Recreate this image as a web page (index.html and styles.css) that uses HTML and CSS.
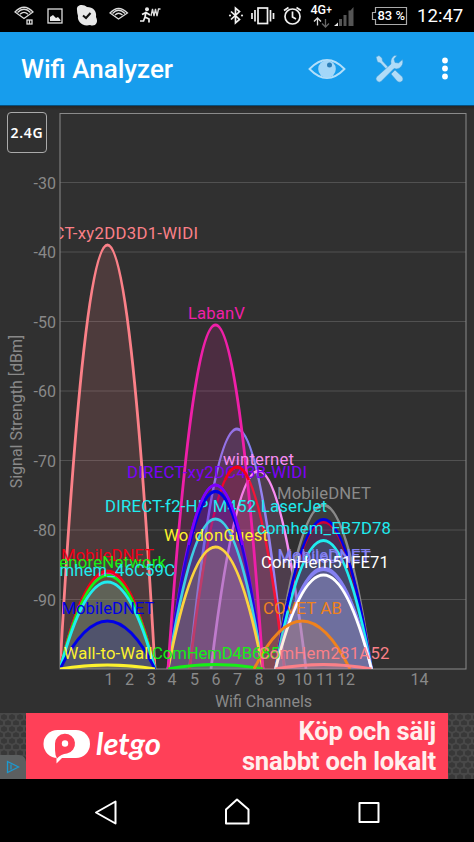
FILE: index.html
```html
<!DOCTYPE html>
<html lang="sv">
<head>
<meta charset="UTF-8">
<meta name="viewport" content="width=device-width, initial-scale=1.0">
<title>Wifi Analyzer</title>
<link rel="stylesheet" href="styles.css">
</head>
<body>
<div class="phone">

<div class="status-bar">
    <svg class="status-left" width="170" height="32" viewBox="0 0 170 32">
        <g class="line">
            <path d="M15 12Q24 2.500 33 12L24 18.500Z"/>
            <path d="M17.500 12.500Q24 6 30.500 12.500M20 14.300Q24 10.500 28 14.300"/>
            <rect x="27" y="20" width="5" height="4"/>
            <path d="M29.500 20V24"/>
            <rect x="48" y="9" width="14" height="14"/>
            <path d="M110 13Q118.500 4 127.500 13L118.500 19Z"/>
            <path d="M112.500 13.500Q118.500 7 125 13.500M115 15Q118.500 11.500 122.500 15"/>
        </g>
        <path class="solid" d="M50 21V17L53 15L56 18L58 17L60.500 20V21Z"/>
        <path class="solid" d="M77 10C76 4 84 4 87 7C93 7 97 11 96 17C99 23 95 27 90 25C82 27 77 21 78 16Q77 13 77 10Z"/>
        <path class="check" d="M83 15.500L86 18L90.500 13"/>
        <circle class="solid" cx="147" cy="9.300" r="2"/>
        <path class="runner" d="M146 12L145 17L149 19V22.500M145 17L143.500 21H140M142 14.500L146 12.500L150 15"/>
        <path class="line" d="M151 16L152.500 9L154 16L155.500 9L157 16L158.500 9L160.500 9"/>
    </svg>
    <svg class="status-right" width="130" height="32" viewBox="225 0 130 32">
        <path class="runner" d="M231 11.500L239.500 19.500L235.500 23V8L239.500 11.500L231 19.500"/>
        <circle class="solid" cx="230" cy="15.500" r="1.100"/>
        <circle class="solid" cx="242" cy="15.500" r="1.100"/>
        <rect class="runner" x="258" y="8" width="9.500" height="15.500"/>
        <path class="runner" d="M255 10V21.500M252 13V19M270.500 10V21.500M273.500 13V19"/>
        <circle class="runner" cx="292.500" cy="16.500" r="7.500"/>
        <path class="runner" d="M292.500 11.500V17L296 19M284 10.500L288.500 7.500M301 10.500L296.500 7.500"/>
        <text class="net" x="310.500" y="13.500">4G<tspan dy="-1" class="plus">+</tspan></text>
        <path class="line" d="M317.500 25.500V18M314 21.500L317.500 18L321 21.500"/>
        <path class="down" d="M325.500 19V27M322 23.500L325.500 27L329 23.500"/>
        <path class="solid" d="M334 26L338 22.500V26Z"/>
        <path class="bars" d="M339 26V19H342V26ZM343.500 26V15H346.500V26ZM348.500 26V10.500H350.500L353.500 7V26Z"/>
    </svg>
    <svg class="battery-icon" width="38" height="32" viewBox="370 0 38 32">
        <path class="frame" d="M375.500 7.500H406.500V24.500H375.500V19.500H372.500V12.500H375.500Z"/>
        <text class="battery" x="377.500" y="20.200" textLength="27.500">83 %</text>
    </svg>
    <span class="clock">12:47</span>
</div>

<header class="app-bar">
    <h1>Wifi Analyzer</h1>
    <svg class="actions" width="152" height="40" viewBox="304 48 152 40">
        <path class="eye" d="M309.500 69Q327 51 344.500 69Q327 87 309.500 69Z"/>
        <circle class="pale" cx="327" cy="69" r="8.800"/>
        <circle class="pupil" cx="329.500" cy="65" r="2.500"/>
        <g class="tools">
            <path d="M376 57L379 55.500L382 58L382.500 61L389.500 68.500L387.500 70.500L380.500 63L377.500 62Z"/>
            <path d="M391 74L395 70L402.500 77Q404 81 400.500 82Q398.500 82.500 397 81Z"/>
            <path d="M376.500 77L391 64Q390 58 394.500 55.500L397 55.500L394 59L395 62.500L398.500 63L402.500 59.500Q404 65 399.500 68Q397 69.500 394 68.500L381 81.500Q379 83 377 81Q375 79 376.500 77Z"/>
        </g>
        <circle class="dot" cx="445" cy="60.500" r="2.900"/>
        <circle class="dot" cx="445" cy="68.500" r="2.900"/>
        <circle class="dot" cx="445" cy="76.500" r="2.900"/>
    </svg>
</header>

<main class="chart">
    <button class="band">2.4G</button>
    <svg width="474" height="608" viewBox="0 105 474 608">
        <defs>
            <clipPath id="plot"><rect x="60" y="113" width="406" height="556"/></clipPath>
        </defs>

        <path class="grid" d="M60 182.500H466M60 252H466M60 321.500H466M60 391H466M60 460.500H466M60 530H466M60 599.500H466"/>
        <g class="axis y-axis">
            <text x="56" y="188.500">-30</text>
            <text x="56" y="258">-40</text>
            <text x="56" y="327.500">-50</text>
            <text x="56" y="397">-60</text>
            <text x="56" y="466.500">-70</text>
            <text x="56" y="536">-80</text>
            <text x="56" y="605.500">-90</text>
        </g>
        <g class="axis">
            <text x="109" y="685">1</text>
            <text x="129.500" y="685">2</text>
            <text x="151.500" y="685">3</text>
            <text x="172" y="685">4</text>
            <text x="194.500" y="685">5</text>
            <text x="216" y="685">6</text>
            <text x="237.500" y="685">7</text>
            <text x="259" y="685">8</text>
            <text x="281" y="685">9</text>
            <text x="303" y="685">10</text>
            <text x="325" y="685">11</text>
            <text x="346" y="685">12</text>
            <text x="419.500" y="685">14</text>
            <text x="263.500" y="707">Wifi Channels</text>
            <text x="0" y="0" transform="translate(22 411.500) rotate(-90)">Signal Strength [dBm]</text>
        </g>
        <rect class="border" x="60" y="113.500" width="406" height="555.500"/>

        <g class="curves" clip-path="url(#plot)">
            <!-- channels 7 and 8 -->
            <path class="lilac" d="M189.500 669Q237 189 284.500 669"/>
            <path class="red" d="M189.500 669Q237 265 284.500 669"/>
            <path class="violet" d="M211 669Q258.500 273 306 669"/>
            <!-- channel 6 -->
            <path class="purple" d="M168 669Q215.500 301 263 669"/>
            <path class="blue" d="M168 669Q215.500 314 263 669"/>
            <path class="cyan" d="M168 669Q215.500 369 263 669"/>
            <path class="yellow" d="M168 669Q215.500 425 263 669"/>
            <path class="magenta" d="M168 669Q215.500 -19 263 669"/>
            <path class="green" d="M168 669Q215.500 660 263 669"/>
            <!-- channels 10 and 11 -->
            <path class="gray" d="M275.500 669Q323.500 341 371.500 669"/>
            <path class="red" d="M275.500 669Q323.500 375 371.500 669"/>
            <path class="blue" d="M275.500 669Q323.500 370 371.500 669"/>
            <path class="cyan" d="M275.500 669Q323.500 412 371.500 669"/>
            <path class="lilac" d="M275.500 669Q323.500 467 371.500 669"/>
            <path class="lilac" d="M275.500 669Q323.500 470 371.500 669"/>
            <path class="white" d="M275.500 669Q323.500 481 371.500 669"/>
            <path class="orange" d="M254 669Q302 573 350 669"/>
            <path class="pink" d="M275.500 669Q323.500 660 371.500 669"/>
            <!-- channel 1 -->
            <path class="pink" d="M60 669Q107.500 -179 155 669"/>
            <path class="magenta" d="M60 669Q107.500 476 155 669"/>
            <path class="red" d="M60 669Q107.500 473 155 669"/>
            <path class="green" d="M60 669Q107.500 482 155 669"/>
            <path class="cyan" d="M60 669Q107.500 495 155 669"/>
            <path class="blue" d="M60 669Q107.500 573 155 669"/>
            <path class="yellow" d="M60 669Q107.500 661 155 669"/>
        </g>
        <g class="names" clip-path="url(#plot)">
            <text class="pink" x="107.500" y="239" textLength="181">DIRECT-xy2DD3D1-WIDI</text>
            <text class="magenta" x="216.500" y="318.500" textLength="57">LabanV</text>
            <text class="purple" x="217" y="478" textLength="180">DIRECT-xy2DC43B-WIDI</text>
            <text class="violet" x="258.500" y="464.500" textLength="71">winternet</text>
            <text class="gray" x="324" y="499" textLength="94">MobileDNET</text>
            <text class="cyan" x="216" y="512" textLength="222">DIRECT-f2-HP M452 LaserJet</text>
            <text class="yellow" x="216" y="540.500" textLength="104">WordonGuest</text>
            <text class="cyan" x="324" y="533.500" textLength="134">comhem_EB7D78</text>
            <text class="lilac" x="324" y="560.500" textLength="93">MobileDNET</text>
            <text class="lilac" x="324.500" y="562.500" textLength="93">MobileDNET</text>
            <text class="white" x="325" y="568" textLength="128">ComHem51FE71</text>
            <text class="red" x="107.500" y="561" textLength="93">MobileDNET</text>
            <text class="green" x="108" y="567.500" textLength="116">LenoreNetwork</text>
            <text class="cyan" x="108" y="575.500" textLength="134">comhem_46C59C</text>
            <text class="orange" x="302.500" y="614" textLength="79">COVET AB</text>
            <text class="blue" x="108" y="614" textLength="93">MobileDNET</text>
            <text class="green" x="216" y="659" textLength="128">ComHemD4B685</text>
            <text class="pink" x="324" y="659" textLength="131">ComHem281A52</text>
            <text class="yellow" x="108" y="659" textLength="89">Wall-to-Wall</text>
        </g>
        <!-- curve tops that run over the names -->
        <g class="tops">
            <path class="red" d="M225 480Q237 454 249 480"/>
            <path class="blue" d="M189.400 545Q215.500 438 241.600 545"/>
            <path class="purple" d="M188.400 545Q215.500 425 242.600 545"/>
            <path class="blue" d="M286 610.500L289.800 594"/>
        </g>
    </svg>
</main>

<div class="ad">
    <svg class="mesh" width="474" height="66">
        <defs>
            <pattern id="hex" width="8" height="12" patternUnits="userSpaceOnUse">
                <path d="M4 1L7 2.500V5.500L4 7L1 5.500V2.500ZM0 7L3 8.500V11.500L0 13L-3 11.500V8.500ZM8 7L11 8.500V11.500L8 13L5 11.500V8.500Z"/>
            </pattern>
        </defs>
        <rect width="474" height="66" fill="url(#hex)"/>
    </svg>
    <div class="banner">
        <svg width="140" height="66" viewBox="26 713 140 66">
            <rect class="logo" x="43.500" y="730" width="46.500" height="28" rx="14"/>
            <path class="logo" d="M56.500 754V763.500L66 754Z"/>
            <path class="pin" d="M55 750V743.500A10 10 0 1 1 67 753.500Q61 754 57 758.500Q55 755 55 750Z"/>
            <circle class="logo" cx="65" cy="743.500" r="3.200"/>
            <text class="brand" x="96" y="755" textLength="65" lengthAdjust="spacingAndGlyphs">letgo</text>
        </svg>
        <p>Köp och sälj<br>snabbt och lokalt</p>
    </div>
    <div class="ad-choice">
        <svg width="14" height="14" viewBox="0 0 14 14"><path d="M1.500 1.500L12.500 7L1.500 12.500ZM5 4.500V9.500"/></svg>
    </div>
</div>

<nav class="nav-bar">
    <svg width="474" height="63" viewBox="0 779 474 63">
        <path d="M115.500 801.500V823.500L96 812.500Z"/>
        <path d="M226 823.500V809.500L237 799.500L248.500 809.500V823.500Z"/>
        <rect x="359.500" y="803" width="19" height="19"/>
    </svg>
</nav>

</div>
</body>
</html>
```
FILE: styles.css
```css
body {
    margin: 0;
    background: #000;
    font-family: Roboto, sans-serif;
}

svg {
    display: block;
}

.phone {
    width: 474px;
    height: 842px;
    overflow: hidden;
    display: flex;
    flex-direction: column;
}

/* status bar */
.status-bar {
    height: 32px;
    display: flex;
    align-items: center;
    color: #eee;
    background: #000;
}

.status-right {
    margin-left: 55px;
}

.battery-icon {
    margin-left: 15px;
}

.clock {
    margin-left: 9px;
    font-size: 18.6px;
    white-space: nowrap;
    color: #fff;
}

.line, .runner, .check, .down, .frame {
    fill: none;
    stroke: #ddd;
    stroke-width: 1.3;
}

.runner {
    stroke: #f0f0f0;
    stroke-width: 1.7;
}

.check {
    stroke: #111;
    stroke-width: 2;
}

.down {
    stroke: #666;
}

.frame {
    stroke: #aaa;
    stroke-width: 1.2;
}

.solid {
    fill: #e8e8e8;
}

.bars {
    fill: #555;
}

.net {
    fill: #fff;
    font-size: 12.5px;
    font-weight: 500;
}

.plus {
    font-size: 10px;
}

.battery {
    fill: #fff;
    font-size: 13px;
    font-weight: 500;
}

/* title bar */
.app-bar {
    height: 73px;
    display: flex;
    align-items: center;
    justify-content: space-between;
    padding: 0 18px 0 21px;
    box-sizing: border-box;
    background: #179ded;
}

.app-bar h1 {
    margin: 1px 0 0;
    font-size: 26px;
    font-weight: 500;
    color: #fff;
}

.actions {
    margin-top: -1px;
}

.eye {
    fill: none;
    stroke: #b3dffa;
    stroke-width: 1.8;
}

.pale {
    fill: #a3d7f8;
}

.pupil {
    fill: #2c7fb8;
}

.tools {
    fill: #b0dcf8;
    stroke: #3b98d4;
    stroke-width: 0.5;
}

.dot {
    fill: #fff;
}

/* chart */
.chart {
    position: relative;
    height: 608px;
    background: linear-gradient(#064f7e 0, #064f7e 1px, #252525 1px, #303030 5px);
}

.band {
    position: absolute;
    left: 7px;
    top: 7px;
    width: 40px;
    height: 41px;
    padding: 0;
    border: 1.5px solid #aaa;
    border-radius: 4px;
    background: #303030;
    color: #fff;
    font: 600 14px "Noto Sans", sans-serif;
    letter-spacing: 0.7px;
}

.grid {
    stroke: #515151;
    fill: none;
}

.border {
    fill: none;
    stroke: #8a8a8a;
}

.axis text {
    fill: #898989;
    font-size: 16px;
    text-anchor: middle;
}

.axis.y-axis text {
    text-anchor: end;
}

.curves path {
    fill: currentColor;
    fill-opacity: 0.15;
    stroke: currentColor;
    stroke-width: 2.8;
}

.tops path {
    fill: none;
    stroke: currentColor;
    stroke-width: 2.8;
}

.names text {
    fill: currentColor;
    font-size: 16.7px;
    text-anchor: middle;
}

.pink { color: #fb8088; }
.magenta { color: #ef1fa8; }
.lilac { color: #8480f2; }
.violet { color: #f78cf3; }
.purple { color: #7d00fb; }
.blue { color: #0000e6; }
.cyan { color: #20ecef; }
.yellow { color: #fdf22d; }
.green { color: #16ef16; }
.red { color: #f20018; }
.gray { color: #8a8a8a; }
.orange { color: #ef821d; }
.white { color: #fff; }

/* ad */
.ad {
    position: relative;
    height: 66px;
    display: flex;
    justify-content: center;
    background: #484848;
}

.mesh {
    position: absolute;
    left: 0;
    top: 0;
}

.mesh path {
    fill: #383838;
}

.banner {
    position: relative;
    width: 422px;
    display: flex;
    justify-content: space-between;
    align-items: center;
    background: #ff4058;
}

.banner p {
    margin: 0 12px 0 0;
    text-align: right;
    font-size: 25.6px;
    line-height: 30px;
    letter-spacing: -0.2px;
    font-weight: bold;
    white-space: nowrap;
    color: #fff0ee;
}

.logo {
    fill: #fff;
}

.pin {
    fill: #ff4058;
}

.brand {
    fill: #fff;
    font: italic bold 31px Lato, sans-serif;
}

.ad-choice {
    position: absolute;
    left: 0;
    bottom: 0;
    width: 26px;
    height: 24px;
    display: flex;
    justify-content: center;
    align-items: center;
    border-top-right-radius: 7px;
    background: #5c5f60;
}

.ad-choice path {
    fill: none;
    stroke: #1c9ad0;
    stroke-width: 1.3;
}

/* navigation */
.nav-bar {
    height: 63px;
    background: #000;
}

.nav-bar path, .nav-bar rect {
    fill: none;
    stroke: #fff;
    stroke-width: 2;
    stroke-linejoin: round;
}
```
